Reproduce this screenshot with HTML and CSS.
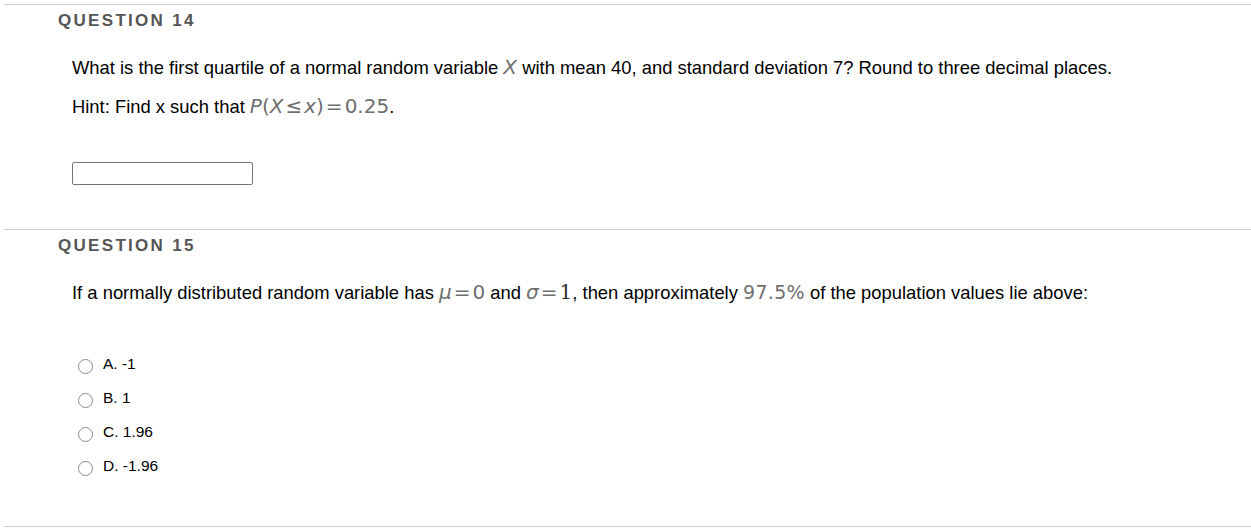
FILE: index.html
```html
<!DOCTYPE html>
<html>
<head>
<meta charset="utf-8">
<link rel="stylesheet" href="styles.css">
</head>
<body>
<div class="page">
  <section class="question">
    <h3 class="q-title">QUESTION 14</h3>
    <p class="q-text">What is the first quartile of a normal random variable <span class="m mi">X</span> with mean 40, and standard deviation 7? Round to three decimal places.</p>
    <p class="q-text hint">Hint: Find x such that <span class="m"><span class="mi">P</span>(<span class="mi">X</span><span class="op">≤</span><span class="mi">x</span>)<span class="op">=</span>0.25</span>.</p>
    <div class="answer"><input class="answer-input" type="text"></div>
  </section>
  <section class="question">
    <h3 class="q-title">QUESTION 15</h3>
    <p class="q-text">If a normally distributed random variable has <span class="m"><span class="mi">μ</span><span class="op">=</span>0</span> and <span class="m"><span class="mi">σ</span><span class="op">=</span><span class="num">1</span></span>, then approximately <span class="m pct">97.5%</span> of the population values lie above:</p>
    <ul class="options">
      <li class="option"><input class="radio" type="radio" name="q15"><span class="opt-label">A. -1</span></li>
      <li class="option"><input class="radio" type="radio" name="q15"><span class="opt-label">B. 1</span></li>
      <li class="option"><input class="radio" type="radio" name="q15"><span class="opt-label">C. 1.96</span></li>
      <li class="option"><input class="radio" type="radio" name="q15"><span class="opt-label">D. -1.96</span></li>
    </ul>
  </section>
  <div class="end-rule"></div>
</div>
</body>
</html>
```
FILE: styles.css
```css
html, body {
  margin: 0;
  padding: 0;
  background: #fff;
}
body {
  font-family: "Liberation Sans", Arial, sans-serif;
  color: #000;
}
.page {
  padding: 4px 0 0 4px;
}
.question {
  border-top: 1px solid #cccccc;
  padding: 7px 0 0 54px;
}
.q-title {
  margin: 0;
  font-size: 17px;
  line-height: 18px;
  font-weight: bold;
  letter-spacing: 2.3px;
  color: #555555;
}
.q-text {
  margin: 27px 0 0 14px;
  font-size: 18.4px;
  line-height: 20px;
}
.q-text.hint {
  margin-top: 18px;
}
.m {
  font-family: "DejaVu Sans", sans-serif;
  color: #6e6e6e;
  font-size: 20px;
  line-height: 20px;
}
.mi {
  font-style: italic;
  font-family: "DejaVu Sans", sans-serif;
  color: #6e6e6e;
  font-size: 20px;
}
.op {
  padding: 0 2px;
}
.num {
  font-family: "DejaVu Serif", serif;
  color: #333;
}
.pct {
  font-size: 19px;
  letter-spacing: 0.3px;
}
.answer {
  margin: 45px 0 0 14px;
  height: 23px;
}
.answer-input {
  box-sizing: border-box;
  width: 181px;
  height: 23px;
  margin: 0;
  padding: 0 4px;
  border: 1px solid #767676;
  border-radius: 2px;
  background: #fff;
  font: 14px "Liberation Sans", Arial, sans-serif;
  display: block;
}
.question:first-of-type {
  padding-bottom: 44px;
}
.options {
  list-style: none;
  margin: 44px 0 0 0;
  padding: 0 0 43px 20px;
}
.option {
  display: flex;
  align-items: center;
  height: 34px;
}
.radio {
  appearance: none;
  -webkit-appearance: none;
  box-sizing: border-box;
  width: 15px;
  height: 15px;
  margin: 4px 10px 0 0;
  border: 1px solid #8a8a8a;
  border-radius: 50%;
  background: #fff;
}
.opt-label {
  font-size: 15.5px;
  line-height: 16px;
}
.end-rule {
  border-top: 1px solid #cccccc;
}
```
